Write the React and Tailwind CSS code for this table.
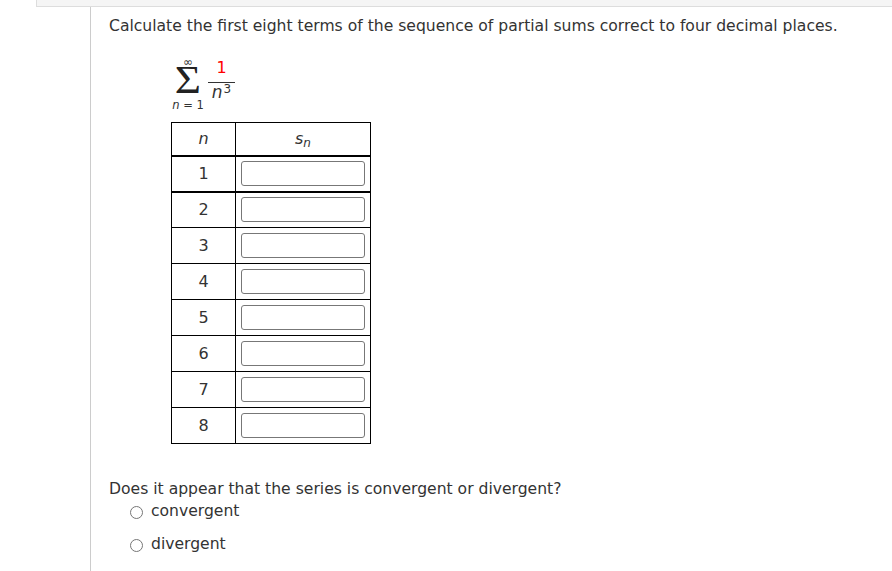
import React from "react";

function Radio({ label }) {
  return (
    <label className="flex items-center gap-[8px] h-[22px]">
      <span className="w-[13px] h-[13px] rounded-full border border-[#767676] bg-white inline-block"></span>
      <span>{label}</span>
    </label>
  );
}

export default function App() {
  const rows = [1, 2, 3, 4, 5, 6, 7, 8];
  return (
    <div className="w-[892px] h-[571px] bg-white overflow-hidden relative text-[#333] text-[15.6px]" style={{ fontFamily: '"DejaVu Sans", Verdana, sans-serif' }}>
      <div className="ml-[36px] h-[7px] bg-[#f5f5f5] border-l border-b border-[#dddddd]"></div>
      <div className="ml-[90px] border-l border-[#cccccc] h-[564px] pl-[18px] pt-[9px]">
        <p className="leading-[20px]">Calculate the first eight terms of the sequence of partial sums correct to four decimal places.</p>
        <div className="ml-[61px] mt-[21px] flex items-start h-[54px]">
          <div className="flex flex-col items-center w-[36px]">
            <span className="text-[12px] leading-[10px] h-[10px]">∞</span>
            <span className="text-[41px] leading-[24px] h-[24px] text-[#222] scale-x-110" style={{ fontFamily: '"Liberation Serif", serif' }}>Σ</span>
            <span className="text-[11.5px] leading-[12px] mt-[8px] whitespace-nowrap"><i>n</i>&nbsp;= 1</span>
          </div>
          <div className="flex flex-col items-center ml-[2px] mt-[3px] w-[27px]">
            <span className="text-[#ff0000] text-[16px] leading-[16px]">1</span>
            <span className="w-[27px] border-t border-[#333] mt-[6px]"></span>
            <span className="flex items-start">
              <i className="text-[17px] leading-[18px]">n</i>
              <span className="text-[12px] leading-[12px] ml-[1px]">3</span>
            </span>
          </div>
        </div>
        <table className="ml-[62px] mt-[11px] border-collapse text-[16px]">
          <thead>
            <tr className="h-[33px]">
              <th className="border border-black border-b-2 w-[64px] font-normal"><i>n</i></th>
              <th className="border border-black border-b-2 w-[135px] font-normal"><i>s<sub className="text-[12px]">n</sub></i></th>
            </tr>
          </thead>
          <tbody>
            {rows.map((r) => (
              <tr key={r} className="h-[36px]">
                <td className={"border border-black text-center " + (r === 1 ? "border-b-2" : "")}>{r}</td>
                <td className={"border border-black px-[5px] " + (r === 1 ? "border-b-2" : "")}>
                  <div className="h-[25px] rounded-[3px] border border-[#777]"></div>
                </td>
              </tr>
            ))}
          </tbody>
        </table>
        <p className="mt-[35px] leading-[20px]">Does it appear that the series is convergent or divergent?</p>
        <div className="ml-[21px] mt-[2px] flex flex-col gap-[11px]">
          <Radio label="convergent" />
          <Radio label="divergent" />
        </div>
      </div>
    </div>
  );
}
